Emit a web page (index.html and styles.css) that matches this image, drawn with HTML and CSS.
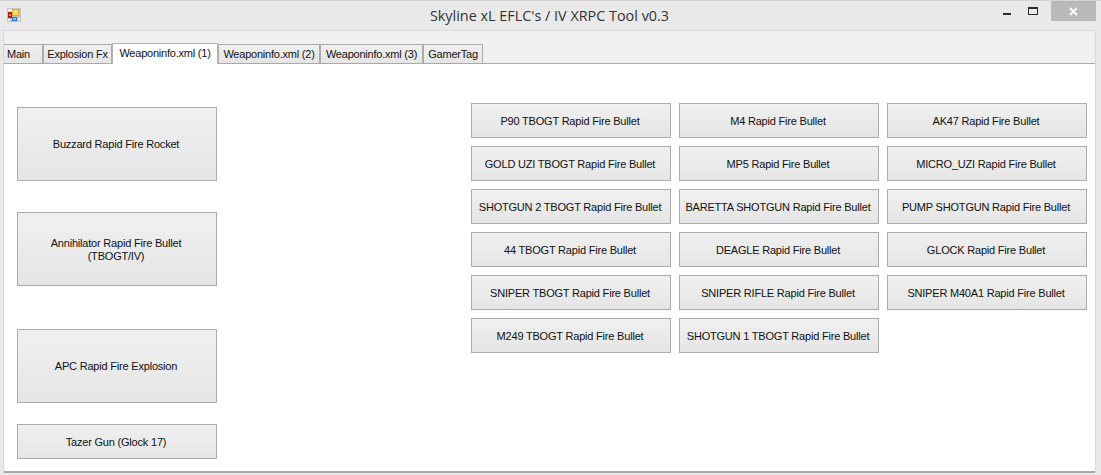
FILE: index.html
```html
<!DOCTYPE html>
<html lang="en">
<head>
  <meta charset="UTF-8" />
  <title>Skyline xL EFLC's / IV XRPC Tool v0.3</title>
  <link rel="stylesheet" href="styles.css">
</head>
<body>
  <div class="window">
    <div class="titlebar">
      <div class="app-icon">
        <svg width="14" height="14" viewBox="0 0 14 14">
          <rect x="0" y="0" width="14" height="14" fill="#c4c4c4"/>
          <rect x="1" y="1" width="4" height="3" fill="#f0f0f0"/>
          <rect x="1" y="11" width="2" height="2" fill="#f0f0f0"/>
          <rect x="11" y="10" width="2" height="3" fill="#f0f0f0"/>
          <rect x="1" y="4" width="4" height="6" fill="#b01c10"/>
          <rect x="2" y="6" width="2" height="2" fill="#f08070"/>
          <rect x="5" y="1" width="7" height="7" fill="#e8a818"/>
          <rect x="6" y="2" width="5" height="5" fill="#fbdc70"/>
          <rect x="5" y="9" width="5" height="4" fill="#3070d0"/>
          <rect x="6" y="10" width="3" height="2" fill="#90c0f0"/>
        </svg>
      </div>
      <div class="title">Skyline xL EFLC's / IV XRPC Tool v0.3</div>
      <div class="controls">
        <div class="ctl ctl-min"><span></span></div>
        <div class="ctl ctl-max"><span></span></div>
        <div class="ctl ctl-close">
          <svg width="9" height="9" viewBox="0 0 9 9">
            <path d="M1 1L8 8M8 1L1 8" stroke="#fff" stroke-width="2" fill="none"/>
          </svg>
        </div>
      </div>
    </div>

    <div class="panel">
      <div class="tabs">
        <div class="tab tab-main">Main</div>
        <div class="tab">Explosion Fx</div>
        <div class="tab active">Weaponinfo.xml (1)</div>
        <div class="tab">Weaponinfo.xml (2)</div>
        <div class="tab">Weaponinfo.xml (3)</div>
        <div class="tab">GamerTag</div>
      </div>

      <div class="page">
        <div class="left-col">
          <button class="btn big">Buzzard Rapid Fire Rocket</button>
          <button class="btn big gap-annihilator">Annihilator Rapid Fire Bullet<br>(TBOGT/IV)</button>
          <button class="btn big gap-apc">APC Rapid Fire Explosion</button>
          <button class="btn tazer">Tazer Gun (Glock 17)</button>
        </div>

        <div class="grid">
          <button class="btn">P90 TBOGT Rapid Fire Bullet</button>
          <button class="btn">M4 Rapid Fire Bullet</button>
          <button class="btn">AK47 Rapid Fire Bullet</button>
          <button class="btn">GOLD UZI TBOGT Rapid Fire Bullet</button>
          <button class="btn">MP5 Rapid Fire Bullet</button>
          <button class="btn">MICRO_UZI Rapid Fire Bullet</button>
          <button class="btn">SHOTGUN 2 TBOGT Rapid Fire Bullet</button>
          <button class="btn">BARETTA SHOTGUN Rapid Fire Bullet</button>
          <button class="btn">PUMP SHOTGUN Rapid Fire Bullet</button>
          <button class="btn">44 TBOGT Rapid Fire Bullet</button>
          <button class="btn">DEAGLE Rapid Fire Bullet</button>
          <button class="btn">GLOCK Rapid Fire Bullet</button>
          <button class="btn">SNIPER TBOGT Rapid Fire Bullet</button>
          <button class="btn">SNIPER RIFLE Rapid Fire Bullet</button>
          <button class="btn">SNIPER M40A1 Rapid Fire Bullet</button>
          <button class="btn">M249 TBOGT Rapid Fire Bullet</button>
          <button class="btn">SHOTGUN 1 TBOGT Rapid Fire Bullet</button>
        </div>
      </div>
    </div>
  </div>
</body>
</html>
```

FILE: styles.css
```css
html, body {
  margin: 0;
  padding: 0;
}

body {
  width: 1101px;
  height: 475px;
  overflow: hidden;
  font-family: "Liberation Sans", Arial, sans-serif;
  background-color: #e9e9e9;
}

.window {
  box-sizing: border-box;
  height: 475px;
  border-top: 1px solid #d4d4d4;
  display: flex;
  flex-direction: column;
}

.titlebar {
  height: 29px;
  display: grid;
  grid-template-columns: 1fr auto 1fr;
  align-items: start;
}

.app-icon {
  padding: 7px 0 0 7px;
  line-height: 0;
}

.title {
  font-family: "Open Sans", sans-serif;
  font-size: 14.4px;
  line-height: 20px;
  padding-top: 5px;
  color: #333;
  margin-left: -2px;
}

.controls {
  display: flex;
  justify-content: flex-end;
  padding-right: 5px;
}

.ctl {
  height: 20px;
  display: flex;
  align-items: center;
  justify-content: center;
}

.ctl-min {
  width: 26px;
  align-items: flex-start;
}

.ctl-min span {
  width: 8px;
  height: 2px;
  margin-top: 12px;
  background-color: #2b2b2b;
}

.ctl-max {
  width: 26px;
  margin-right: 5px;
  align-items: flex-start;
}

.ctl-max span {
  box-sizing: border-box;
  width: 10px;
  height: 8px;
  margin-top: 6px;
  border: 1px solid #2b2b2b;
  border-top-width: 2px;
}

.ctl-close {
  width: 45px;
  background-color: #b9b9b9;
}

.panel {
  box-sizing: border-box;
  width: 1093px;
  height: 443px;
  margin-left: 3px;
  border: 1px solid #d9d9d9;
  border-bottom: none;
  background-color: #f0f0f0;
  display: flex;
  flex-direction: column;
}

.tabs {
  display: grid;
  grid-template-columns: 39px 69px 106px 102px 103px 60px;
  height: 33px;
  padding-top: 12px;
  box-sizing: border-box;
  align-items: end;
  border-bottom: 1px solid #a9a9a9;
}

.tab {
  box-sizing: border-box;
  height: 19px;
  line-height: 18px;
  font-size: 11px;
  letter-spacing: -0.22px;
  text-align: center;
  color: #111;
  white-space: nowrap;
  border: 1px solid #acacac;
  border-bottom: none;
  background: linear-gradient(#f0f0f0, #e5e5e5);
}

.tab-main {
  border-left: none;
  text-align: left;
  padding-left: 3px;
}

.tab.active {
  height: 21px;
  margin-bottom: -1px;
  line-height: 18px;
  background: #fff;
  border-color: #b4b4b4;
  position: relative;
}

.page {
  flex: 1;
  background: #fff;
  border-bottom: 2px solid #a9a9a9;
  display: flex;
  padding-left: 13px;
}

.btn {
  box-sizing: border-box;
  margin: 0;
  padding: 1px 2px 0 0;
  width: 200px;
  height: 35px;
  font-family: "Liberation Sans", Arial, sans-serif;
  font-size: 11px;
  letter-spacing: -0.2px;
  line-height: 13px;
  color: #111;
  border: 1px solid #acacac;
  border-radius: 0;
  background: linear-gradient(#f0f0f0, #e5e5e5);
}

.left-col {
  display: flex;
  flex-direction: column;
  padding-top: 43px;
  width: 454px;
}

.big {
  height: 74px;
}

.gap-annihilator {
  margin-top: 31px;
}

.gap-apc {
  margin-top: 43px;
}

.tazer {
  margin-top: 21px;
}

.grid {
  display: grid;
  grid-template-columns: repeat(3, 200px);
  grid-auto-rows: 35px;
  gap: 8px;
  padding-top: 39px;
  align-content: start;
}
```
